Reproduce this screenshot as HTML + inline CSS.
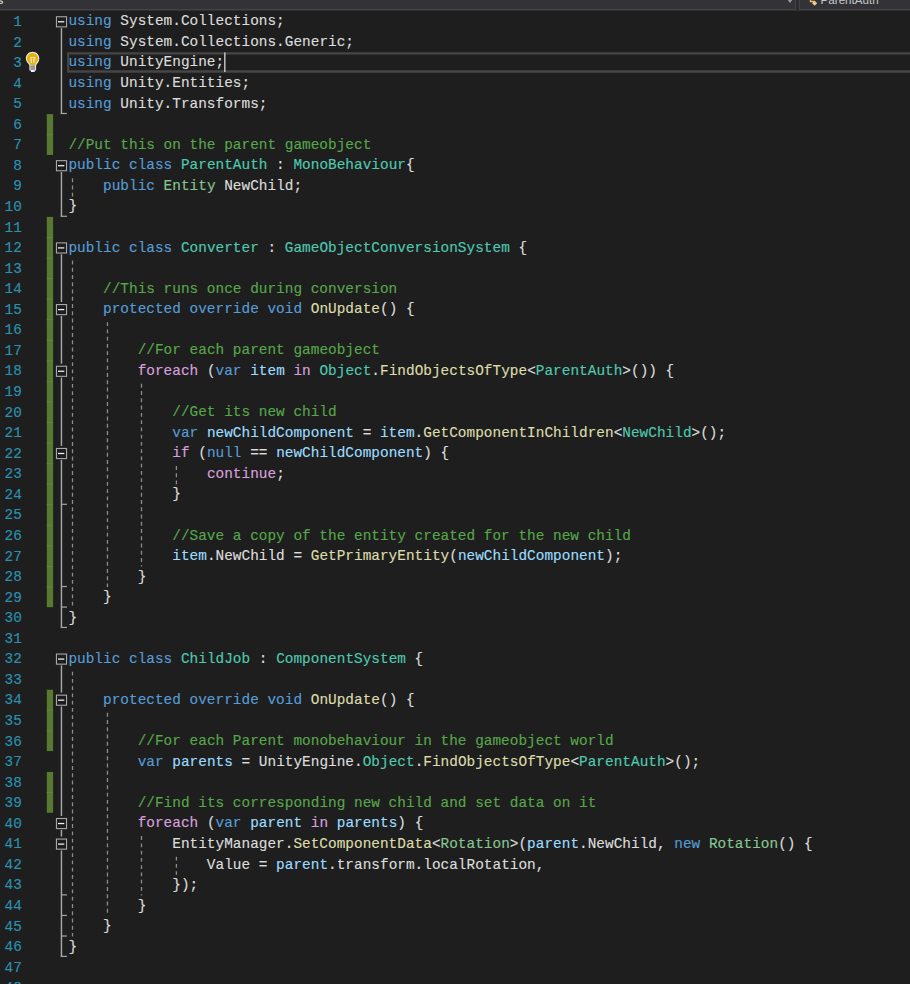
<!DOCTYPE html>
<html><head><meta charset="utf-8"><title>ParentAuth.cs</title>
<style>
html,body{margin:0;padding:0;background:#1e1e1e;}
body{width:910px;height:984px;overflow:hidden;position:relative;font-family:"Liberation Mono",monospace;}
#ed{position:absolute;left:0;top:0;width:910px;height:984px;overflow:hidden;background:#1e1e1e;}
#bar{position:absolute;left:0;top:0;width:910px;height:11px;background:#2d2d30;overflow:hidden;z-index:5}
#bar .dd{position:absolute;top:-6px;height:16px;box-sizing:border-box;border:1px solid #434346;background:#333337}
#bar .r10{position:absolute;left:0;top:10px;width:910px;height:1px;background:#303033}
#bar .txt{position:absolute;left:820.6px;top:-6.6px;font:11.6px/14px "Liberation Sans",sans-serif;color:#c4c8cc;white-space:pre}
#bar .lt{position:absolute;left:-2.5px;top:-6.6px;font:11.6px/14px "Liberation Sans",sans-serif;color:#f4f4f4;white-space:pre}
#bar .arr{position:absolute;left:786.5px;top:-1.5px;width:0;height:0;border-left:3.5px solid transparent;border-right:3.5px solid transparent;border-top:4px solid #999}
.ln,.cl{position:absolute;height:21px;line-height:21px;margin-top:1px;font-size:14.4px;white-space:pre;letter-spacing:0.0186px;-webkit-text-stroke:0.15px}
.ln{left:0;width:21.8px;text-align:right;color:#2b91af}
.cl{left:68.4px;color:#dcdcdc}
.k{color:#569cd6}.c{color:#d8a0df}.t{color:#4ec9b0}.s{color:#86c691}.m{color:#dcdcaa}.v{color:#9cdcfe}.cm{color:#57a64a}
#art{position:absolute;left:0;top:0}
</style></head><body>
<div id="ed">
<svg id="art" width="910" height="984" viewBox="0 0 910 984">
<path d="M67.1 52.22 H912 V72.72 H67.1 Z M69.2 54.52 V70.32 H912 V54.52 Z" fill="#464646" fill-rule="evenodd"/>
<rect x="224.15" y="52.42" width="1.35" height="19.61" fill="#d0d0d0"/>
<path d="M32.6 51.85 C28.8 51.85 25.85 54.8 25.85 58.4 C25.85 60.6 27 62 28.2 63.4 C29 64.3 29.4 65 29.4 66 L29.4 70.5 L30.9 70.5 L30.9 72 L34.6 72 L34.6 70.5 L36.1 70.5 L36.1 66 C36.1 65 36.5 64.3 37.3 63.4 C38.5 62 39.3 60.6 39.3 58.4 C39.3 54.8 36.4 51.85 32.6 51.85 Z" fill="#e6e6ee"/>
<path d="M32.6 52.9 C29.4 52.9 26.95 55.4 26.95 58.4 C26.95 60.2 27.9 61.4 29 62.7 C29.9 63.7 30.4 64.4 30.5 65.2 L34.9 65.2 C35 64.4 35.4 63.7 36.3 62.7 C37.4 61.4 38.25 60.2 38.25 58.4 C38.25 55.4 35.8 52.9 32.6 52.9 Z" fill="#e6b400"/>
<path d="M30.1 57.4 Q30.1 56.9 30.7 56.9 L34.9 56.9 Q35.5 56.9 35.5 57.4 L34.3 63 L31 63 Z" fill="#e4dfd2"/>
<path d="M31.2 58 H34 V58.8 H33.15 V63.2 H32 V58.8 H31.2 Z" fill="#e2ae00"/>
<rect x="30.5" y="65.3" width="4.5" height="4.9" fill="#a2a2a2"/>
<rect x="30.5" y="66.3" width="4.5" height="0.7" fill="#8a8a8a"/>
<rect x="30.5" y="68.2" width="4.5" height="0.7" fill="#8a8a8a"/>
<rect x="31" y="70.2" width="3.5" height="1.6" fill="#f4f4f4"/>
<rect x="46.8" y="114.09" width="6.3" height="40.82" fill="#587a30"/>
<rect x="46.8" y="134.25" width="6.3" height="0.9" fill="#63863a"/>
<rect x="46.8" y="216.88" width="6.3" height="390.30" fill="#587a30"/>
<rect x="46.8" y="237.04" width="6.3" height="0.9" fill="#63863a"/>
<rect x="46.8" y="257.60" width="6.3" height="0.9" fill="#63863a"/>
<rect x="46.8" y="278.15" width="6.3" height="0.9" fill="#63863a"/>
<rect x="46.8" y="298.71" width="6.3" height="0.9" fill="#63863a"/>
<rect x="46.8" y="319.27" width="6.3" height="0.9" fill="#63863a"/>
<rect x="46.8" y="339.83" width="6.3" height="0.9" fill="#63863a"/>
<rect x="46.8" y="360.39" width="6.3" height="0.9" fill="#63863a"/>
<rect x="46.8" y="380.94" width="6.3" height="0.9" fill="#63863a"/>
<rect x="46.8" y="401.50" width="6.3" height="0.9" fill="#63863a"/>
<rect x="46.8" y="422.06" width="6.3" height="0.9" fill="#63863a"/>
<rect x="46.8" y="442.62" width="6.3" height="0.9" fill="#63863a"/>
<rect x="46.8" y="463.18" width="6.3" height="0.9" fill="#63863a"/>
<rect x="46.8" y="483.73" width="6.3" height="0.9" fill="#63863a"/>
<rect x="46.8" y="504.29" width="6.3" height="0.9" fill="#63863a"/>
<rect x="46.8" y="524.85" width="6.3" height="0.9" fill="#63863a"/>
<rect x="46.8" y="545.41" width="6.3" height="0.9" fill="#63863a"/>
<rect x="46.8" y="565.97" width="6.3" height="0.9" fill="#63863a"/>
<rect x="46.8" y="586.52" width="6.3" height="0.9" fill="#63863a"/>
<rect x="46.8" y="689.71" width="6.3" height="61.37" fill="#587a30"/>
<rect x="46.8" y="709.87" width="6.3" height="0.9" fill="#63863a"/>
<rect x="46.8" y="730.43" width="6.3" height="0.9" fill="#63863a"/>
<rect x="46.8" y="771.95" width="6.3" height="40.82" fill="#587a30"/>
<rect x="46.8" y="792.10" width="6.3" height="0.9" fill="#63863a"/>
<line x1="61.45" y1="28.10" x2="61.45" y2="113.49" stroke="#a8a8a8" stroke-width="1.45"/>
<line x1="60.65" y1="113.49" x2="66.9" y2="113.49" stroke="#a8a8a8" stroke-width="1.2"/>
<line x1="61.45" y1="172.01" x2="61.45" y2="216.28" stroke="#a8a8a8" stroke-width="1.45"/>
<line x1="60.65" y1="216.28" x2="66.9" y2="216.28" stroke="#a8a8a8" stroke-width="1.2"/>
<line x1="61.45" y1="254.24" x2="61.45" y2="302.01" stroke="#a8a8a8" stroke-width="1.45"/>
<line x1="61.45" y1="315.91" x2="61.45" y2="363.69" stroke="#a8a8a8" stroke-width="1.45"/>
<line x1="61.45" y1="377.59" x2="61.45" y2="445.92" stroke="#a8a8a8" stroke-width="1.45"/>
<line x1="61.45" y1="459.82" x2="61.45" y2="627.44" stroke="#a8a8a8" stroke-width="1.45"/>
<line x1="60.65" y1="627.44" x2="66.9" y2="627.44" stroke="#a8a8a8" stroke-width="1.2"/>
<line x1="61.45" y1="665.40" x2="61.45" y2="692.61" stroke="#a8a8a8" stroke-width="1.45"/>
<line x1="61.45" y1="706.51" x2="61.45" y2="815.96" stroke="#a8a8a8" stroke-width="1.45"/>
<line x1="61.45" y1="829.86" x2="61.45" y2="836.52" stroke="#a8a8a8" stroke-width="1.45"/>
<line x1="61.45" y1="850.42" x2="61.45" y2="956.37" stroke="#a8a8a8" stroke-width="1.45"/>
<line x1="60.65" y1="956.37" x2="66.9" y2="956.37" stroke="#a8a8a8" stroke-width="1.2"/>
<line x1="61.45" y1="504.29" x2="66.9" y2="504.29" stroke="#a8a8a8" stroke-width="1.2"/>
<line x1="61.45" y1="586.52" x2="66.9" y2="586.52" stroke="#a8a8a8" stroke-width="1.2"/>
<line x1="61.45" y1="607.08" x2="66.9" y2="607.08" stroke="#a8a8a8" stroke-width="1.2"/>
<line x1="61.45" y1="894.89" x2="66.9" y2="894.89" stroke="#a8a8a8" stroke-width="1.2"/>
<line x1="61.45" y1="915.45" x2="66.9" y2="915.45" stroke="#a8a8a8" stroke-width="1.2"/>
<line x1="61.45" y1="936.01" x2="66.9" y2="936.01" stroke="#a8a8a8" stroke-width="1.2"/>
<rect x="56.45" y="16.75" width="10.10" height="10.10" fill="#1e1e1e" stroke="#a8a8a8" stroke-width="1.1"/>
<rect x="58" y="21.15" width="6.3" height="1.25" fill="#f2f2f2"/>
<rect x="56.45" y="160.66" width="10.10" height="10.10" fill="#1e1e1e" stroke="#a8a8a8" stroke-width="1.1"/>
<rect x="58" y="165.06" width="6.3" height="1.25" fill="#f2f2f2"/>
<rect x="56.45" y="242.89" width="10.10" height="10.10" fill="#1e1e1e" stroke="#a8a8a8" stroke-width="1.1"/>
<rect x="58" y="247.29" width="6.3" height="1.25" fill="#f2f2f2"/>
<rect x="56.45" y="654.05" width="10.10" height="10.10" fill="#1e1e1e" stroke="#a8a8a8" stroke-width="1.1"/>
<rect x="58" y="658.45" width="6.3" height="1.25" fill="#f2f2f2"/>
<rect x="56.45" y="304.56" width="10.10" height="10.10" fill="#1e1e1e" stroke="#a8a8a8" stroke-width="1.1"/>
<rect x="58" y="308.96" width="6.3" height="1.25" fill="#f2f2f2"/>
<rect x="56.45" y="366.24" width="10.10" height="10.10" fill="#1e1e1e" stroke="#a8a8a8" stroke-width="1.1"/>
<rect x="58" y="370.64" width="6.3" height="1.25" fill="#f2f2f2"/>
<rect x="56.45" y="448.47" width="10.10" height="10.10" fill="#1e1e1e" stroke="#a8a8a8" stroke-width="1.1"/>
<rect x="58" y="452.87" width="6.3" height="1.25" fill="#f2f2f2"/>
<rect x="56.45" y="695.16" width="10.10" height="10.10" fill="#1e1e1e" stroke="#a8a8a8" stroke-width="1.1"/>
<rect x="58" y="699.56" width="6.3" height="1.25" fill="#f2f2f2"/>
<rect x="56.45" y="818.51" width="10.10" height="10.10" fill="#1e1e1e" stroke="#a8a8a8" stroke-width="1.1"/>
<rect x="58" y="822.91" width="6.3" height="1.25" fill="#f2f2f2"/>
<rect x="56.45" y="839.07" width="10.10" height="10.10" fill="#1e1e1e" stroke="#a8a8a8" stroke-width="1.1"/>
<rect x="58" y="843.47" width="6.3" height="1.25" fill="#f2f2f2"/>
<line x1="72.50" y1="178.26" x2="72.50" y2="196.42" stroke="#8c8c8c" stroke-width="1.3" stroke-dasharray="3.9 3.36"/>
<line x1="72.50" y1="260.50" x2="72.50" y2="607.58" stroke="#8c8c8c" stroke-width="1.3" stroke-dasharray="3.9 3.36"/>
<line x1="107.45" y1="322.17" x2="107.45" y2="587.02" stroke="#8c8c8c" stroke-width="1.3" stroke-dasharray="3.9 3.36"/>
<line x1="141.50" y1="383.84" x2="141.50" y2="566.47" stroke="#8c8c8c" stroke-width="1.3" stroke-dasharray="3.9 3.36"/>
<line x1="176.40" y1="466.08" x2="176.40" y2="484.23" stroke="#8c8c8c" stroke-width="1.3" stroke-dasharray="3.9 3.36"/>
<line x1="72.50" y1="671.66" x2="72.50" y2="936.51" stroke="#8c8c8c" stroke-width="1.3" stroke-dasharray="3.9 3.36"/>
<line x1="107.45" y1="712.77" x2="107.45" y2="915.95" stroke="#8c8c8c" stroke-width="1.3" stroke-dasharray="3.9 3.36"/>
<line x1="141.50" y1="836.12" x2="141.50" y2="895.39" stroke="#8c8c8c" stroke-width="1.3" stroke-dasharray="3.9 3.36"/>
<line x1="176.40" y1="856.68" x2="176.40" y2="874.84" stroke="#8c8c8c" stroke-width="1.3" stroke-dasharray="3.9 3.36"/>
</svg>
<div class="ln" style="top:11px">1</div>
<div class="cl" style="top:10px"><span class="k">using</span> System.Collections;</div>
<div class="ln" style="top:32px">2</div>
<div class="cl" style="top:31px"><span class="k">using</span> System.Collections.Generic;</div>
<div class="ln" style="top:52px">3</div>
<div class="cl" style="top:51px"><span class="k">using</span> UnityEngine;</div>
<div class="ln" style="top:73px">4</div>
<div class="cl" style="top:72px"><span class="k">using</span> Unity.Entities;</div>
<div class="ln" style="top:93px">5</div>
<div class="cl" style="top:93px"><span class="k">using</span> Unity.Transforms;</div>
<div class="ln" style="top:114px">6</div>
<div class="ln" style="top:134px">7</div>
<div class="cl" style="top:134px"><span class="cm">//Put this on the parent gameobject</span></div>
<div class="ln" style="top:155px">8</div>
<div class="cl" style="top:154px"><span class="k">public</span> <span class="k">class</span> <span class="t">ParentAuth</span> : <span class="t">MonoBehaviour</span>{</div>
<div class="ln" style="top:175px">9</div>
<div class="cl" style="top:175px">    <span class="k">public</span> <span class="s">Entity</span> NewChild;</div>
<div class="ln" style="top:196px">10</div>
<div class="cl" style="top:195px">}</div>
<div class="ln" style="top:217px">11</div>
<div class="ln" style="top:237px">12</div>
<div class="cl" style="top:237px"><span class="k">public</span> <span class="k">class</span> <span class="t">Converter</span> : <span class="t">GameObjectConversionSystem</span> {</div>
<div class="ln" style="top:258px">13</div>
<div class="ln" style="top:278px">14</div>
<div class="cl" style="top:278px">    <span class="cm">//This runs once during conversion</span></div>
<div class="ln" style="top:299px">15</div>
<div class="cl" style="top:298px">    <span class="k">protected</span> <span class="k">override</span> <span class="k">void</span> <span class="m">OnUpdate</span>() {</div>
<div class="ln" style="top:319px">16</div>
<div class="ln" style="top:340px">17</div>
<div class="cl" style="top:339px">        <span class="cm">//For each parent gameobject</span></div>
<div class="ln" style="top:360px">18</div>
<div class="cl" style="top:360px">        <span class="c">foreach</span> (<span class="k">var</span> <span class="v">item</span> <span class="c">in</span> <span class="t">Object</span>.<span class="m">FindObjectsOfType</span>&lt;<span class="t">ParentAuth</span>&gt;()) {</div>
<div class="ln" style="top:381px">19</div>
<div class="ln" style="top:402px">20</div>
<div class="cl" style="top:401px">            <span class="cm">//Get its new child</span></div>
<div class="ln" style="top:422px">21</div>
<div class="cl" style="top:422px">            <span class="k">var</span> <span class="v">newChildComponent</span> = <span class="v">item</span>.<span class="m">GetComponentInChildren</span>&lt;<span class="t">NewChild</span>&gt;();</div>
<div class="ln" style="top:443px">22</div>
<div class="cl" style="top:442px">            <span class="c">if</span> (<span class="k">null</span> == <span class="v">newChildComponent</span>) {</div>
<div class="ln" style="top:463px">23</div>
<div class="cl" style="top:463px">                <span class="c">continue</span>;</div>
<div class="ln" style="top:484px">24</div>
<div class="cl" style="top:483px">            }</div>
<div class="ln" style="top:504px">25</div>
<div class="ln" style="top:525px">26</div>
<div class="cl" style="top:525px">            <span class="cm">//Save a copy of the entity created for the new child</span></div>
<div class="ln" style="top:546px">27</div>
<div class="cl" style="top:545px">            <span class="v">item</span>.NewChild = <span class="m">GetPrimaryEntity</span>(<span class="v">newChildComponent</span>);</div>
<div class="ln" style="top:566px">28</div>
<div class="cl" style="top:566px">        }</div>
<div class="ln" style="top:587px">29</div>
<div class="cl" style="top:586px">    }</div>
<div class="ln" style="top:607px">30</div>
<div class="cl" style="top:607px">}</div>
<div class="ln" style="top:628px">31</div>
<div class="ln" style="top:648px">32</div>
<div class="cl" style="top:648px"><span class="k">public</span> <span class="k">class</span> <span class="t">ChildJob</span> : <span class="t">ComponentSystem</span> {</div>
<div class="ln" style="top:669px">33</div>
<div class="ln" style="top:689px">34</div>
<div class="cl" style="top:689px">    <span class="k">protected</span> <span class="k">override</span> <span class="k">void</span> <span class="m">OnUpdate</span>() {</div>
<div class="ln" style="top:710px">35</div>
<div class="ln" style="top:731px">36</div>
<div class="cl" style="top:730px">        <span class="cm">//For each Parent monobehaviour in the gameobject world</span></div>
<div class="ln" style="top:751px">37</div>
<div class="cl" style="top:751px">        <span class="k">var</span> <span class="v">parents</span> = UnityEngine.<span class="t">Object</span>.<span class="m">FindObjectsOfType</span>&lt;<span class="t">ParentAuth</span>&gt;();</div>
<div class="ln" style="top:772px">38</div>
<div class="ln" style="top:792px">39</div>
<div class="cl" style="top:792px">        <span class="cm">//Find its corresponding new child and set data on it</span></div>
<div class="ln" style="top:813px">40</div>
<div class="cl" style="top:812px">        <span class="c">foreach</span> (<span class="k">var</span> <span class="v">parent</span> <span class="c">in</span> <span class="v">parents</span>) {</div>
<div class="ln" style="top:833px">41</div>
<div class="cl" style="top:833px">            EntityManager.<span class="m">SetComponentData</span>&lt;<span class="s">Rotation</span>&gt;(<span class="v">parent</span>.NewChild, <span class="k">new</span> <span class="s">Rotation</span>() {</div>
<div class="ln" style="top:854px">42</div>
<div class="cl" style="top:854px">                Value = <span class="v">parent</span>.transform.localRotation,</div>
<div class="ln" style="top:874px">43</div>
<div class="cl" style="top:874px">            });</div>
<div class="ln" style="top:895px">44</div>
<div class="cl" style="top:895px">        }</div>
<div class="ln" style="top:916px">45</div>
<div class="cl" style="top:915px">    }</div>
<div class="ln" style="top:936px">46</div>
<div class="cl" style="top:936px">}</div>
<div class="ln" style="top:957px">47</div>
<div class="ln" style="top:977px">48</div>
</div>
<div id="bar"><div class="dd" style="left:-2px;width:798px"></div><div class="dd" style="left:799px;width:120px"></div><div class="r10"></div><div class="lt">s</div><div class="arr"></div>
<svg style="position:absolute;left:809px;top:-4px" width="10" height="11" viewBox="0 0 10 11"><path d="M1.5 2 L1.5 5.5 L5 5.5" fill="none" stroke="#f0bd76" stroke-width="1.4"/><path d="M5.6 4.6 L8.2 7.2 L5.6 9.8 L3 7.2 Z" fill="#f4c682"/></svg>
<div class="txt">ParentAuth</div></div>
</body></html>
